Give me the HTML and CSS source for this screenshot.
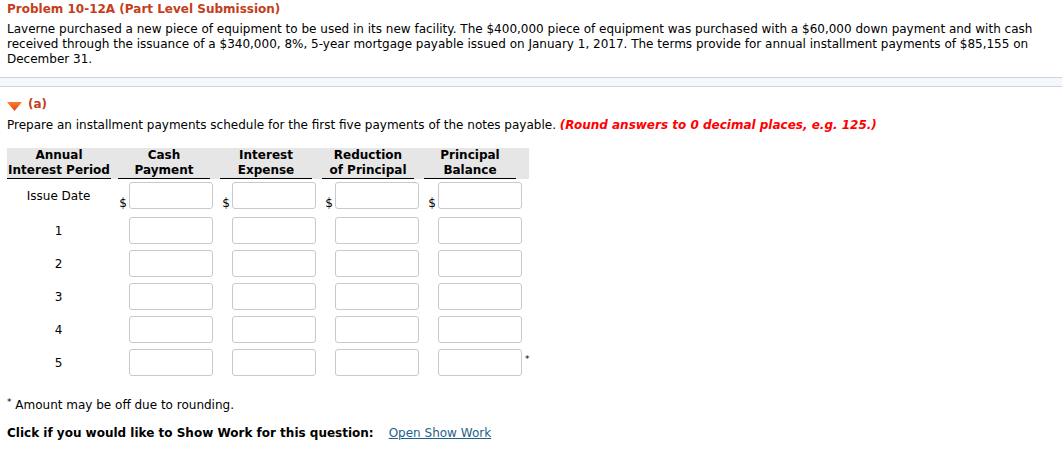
FILE: index.html
```html
<!DOCTYPE html>
<html>
<head>
<meta charset="utf-8">
<link rel="stylesheet" href="styles.css">
</head>
<body>
<div class="top">
  <div class="title">Problem 10-12A (Part Level Submission)</div>
  <p class="intro">Laverne purchased a new piece of equipment to be used in its new facility. The $400,000 piece of equipment was purchased with a $60,000 down payment and with cash received through the issuance of a $340,000, 8%, 5-year mortgage payable issued on January 1, 2017. The terms provide for annual installment payments of $85,155 on December 31.</p>
</div>
<div class="band"></div>
<div class="part">
  <div class="part-head">
    <svg class="tri" width="15" height="9" viewBox="0 0 15 9"><defs><linearGradient id="g" x1="0" y1="0" x2="0" y2="1"><stop offset="0" stop-color="#ff7a2a"/><stop offset="1" stop-color="#e0451a"/></linearGradient></defs><polygon points="0,0 15,0 7.5,9" fill="url(#g)"/></svg>
    <span class="part-label">(a)</span>
  </div>
  <p class="prompt">Prepare an installment payments schedule for the first five payments of the notes payable. <span class="note">(Round answers to 0 decimal places, e.g. 125.)</span></p>

  <div class="schedule">
    <div class="head">
      <div class="hcell first"><span>Annual<br>Interest Period</span></div>
      <div class="hcell"><span>Cash<br>Payment</span></div>
      <div class="hcell"><span>Interest<br>Expense</span></div>
      <div class="hcell"><span>Reduction<br>of Principal</span></div>
      <div class="hcell"><span>Principal<br>Balance</span></div>
    </div>

    <div class="row issue">
      <div class="label">Issue Date</div>
      <span class="cur">$</span><input class="box" type="text">
      <span class="cur">$</span><input class="box" type="text">
      <span class="cur">$</span><input class="box" type="text">
      <span class="cur">$</span><input class="box" type="text">
    </div>
    <div class="row">
      <div class="label">1</div>
      <span class="cur"></span><input class="box" type="text">
      <span class="cur"></span><input class="box" type="text">
      <span class="cur"></span><input class="box" type="text">
      <span class="cur"></span><input class="box" type="text">
    </div>
    <div class="row">
      <div class="label">2</div>
      <span class="cur"></span><input class="box" type="text">
      <span class="cur"></span><input class="box" type="text">
      <span class="cur"></span><input class="box" type="text">
      <span class="cur"></span><input class="box" type="text">
    </div>
    <div class="row">
      <div class="label">3</div>
      <span class="cur"></span><input class="box" type="text">
      <span class="cur"></span><input class="box" type="text">
      <span class="cur"></span><input class="box" type="text">
      <span class="cur"></span><input class="box" type="text">
    </div>
    <div class="row">
      <div class="label">4</div>
      <span class="cur"></span><input class="box" type="text">
      <span class="cur"></span><input class="box" type="text">
      <span class="cur"></span><input class="box" type="text">
      <span class="cur"></span><input class="box" type="text">
    </div>
    <div class="row">
      <div class="label">5</div>
      <span class="cur"></span><input class="box" type="text">
      <span class="cur"></span><input class="box" type="text">
      <span class="cur"></span><input class="box" type="text">
      <span class="cur"></span><input class="box" type="text">
      <span class="star">*</span>
    </div>
  </div>

  <p class="foot"><sup class="fstar">*</sup> Amount may be off due to rounding.</p>
  <p class="showwork"><b>Click if you would like to Show Work for this question:</b><a class="link" href="#">Open Show Work</a></p>
</div>
</body>
</html>
```
FILE: styles.css
```css
html, body {
  margin: 0;
  padding: 0;
  background: #fff;
}
body {
  font-family: "DejaVu Sans", Verdana, sans-serif;
  font-size: 12px;
  line-height: 15px;
  color: #000;
}
.top {
  padding: 2px 7px 0 7px;
}
.title {
  font-weight: bold;
  color: #c53e1b;
}
.intro {
  margin: 5px 0 0 0;
}
.band {
  margin-top: 10px;
  height: 8px;
  background: #f4f7fb;
  border-top: 1px solid #cdd3dc;
  border-bottom: 1px solid #cdd3dc;
}
.part {
  padding: 0 7px;
}
.part-head {
  margin-top: 10px;
  display: flex;
  align-items: center;
  height: 15px;
}
.tri {
  display: block;
  margin-top: 3px;
}
.part-label {
  margin-left: 6px;
  font-weight: bold;
  color: #c53e1b;
}
.prompt {
  margin: 6px 0 0 0;
}
.note {
  color: #f00;
  font-weight: bold;
  font-style: italic;
}
.schedule {
  margin-top: 15px;
}
.head {
  display: flex;
  width: 509px;
  padding-right: 13px;
  background: #e6e6e6;
  gap: 10px;
}
.hcell {
  width: 92px;
  text-align: center;
  font-weight: bold;
  border-bottom: 1px solid #000;
}
.hcell.first {
  width: 104px;
  margin-right: -3px;
}
.row {
  display: flex;
  align-items: center;
  height: 27px;
  margin-top: 6px;
}
.row.issue {
  margin-top: 3px;
  margin-bottom: 8px;
}
.label {
  width: 103px;
  text-align: center;
  padding-top: 2px;
}
.cur {
  width: 17px;
  padding-right: 2px;
  text-align: right;
  align-self: flex-end;
  line-height: 12px;
}
.box {
  box-sizing: border-box;
  width: 84px;
  height: 27px;
  margin: 0;
  padding: 0 4px;
  border: 1px solid #c9c9c9;
  border-radius: 3px;
  background: #fff;
  font-family: inherit;
  font-size: 12px;
}
.star {
  align-self: flex-start;
  margin-left: 3px;
  margin-top: 6px;
  font-size: 9px;
  line-height: 9px;
}
.foot {
  margin: 22px 0 0 0;
}
.fstar {
  font-size: 9px;
  line-height: 0;
  vertical-align: 4px;
}
.showwork {
  margin: 13px 0 0 0;
}
.link {
  margin-left: 15px;
  color: #1f5f8b;
  text-decoration: underline;
}
```
